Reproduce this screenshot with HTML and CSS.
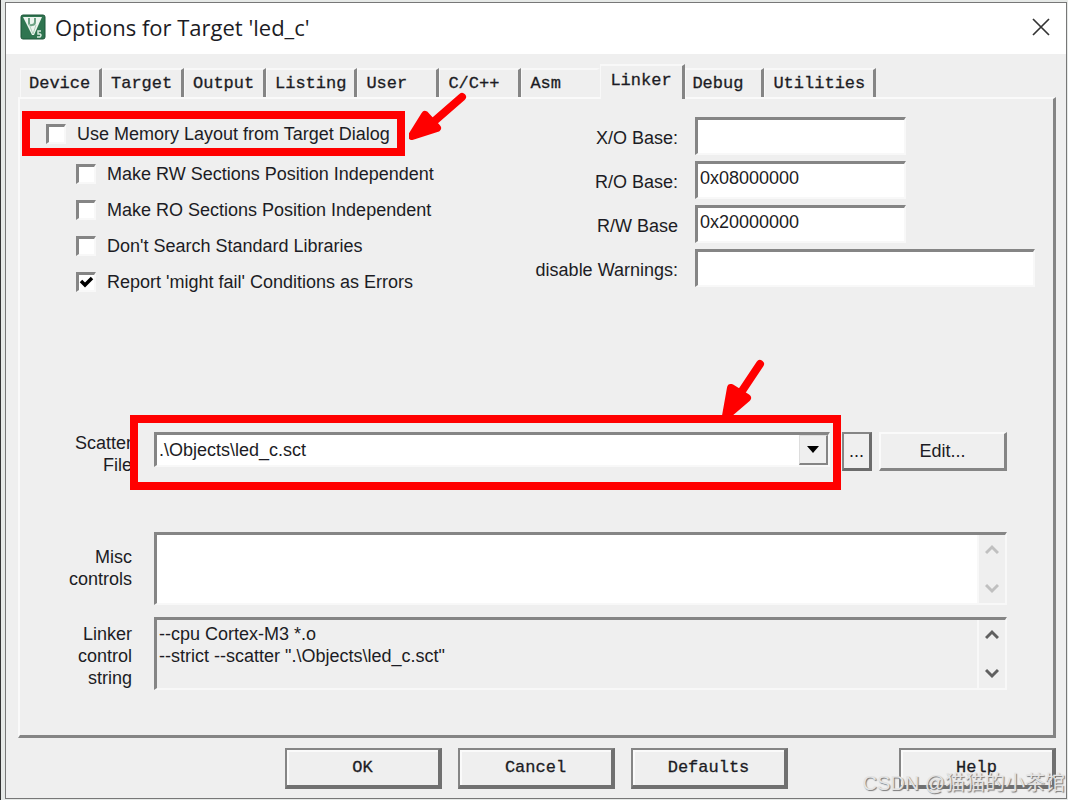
FILE: index.html
```html
<!DOCTYPE html>
<html lang="en">
<head>
  <meta charset="UTF-8">
  <meta name="viewport" content="width=device-width, initial-scale=1">
  <title>Options for Target 'led_c'</title>
  <link rel="stylesheet" href="styles.css">
</head>
<body>
  <div class="dialog">
    <header class="titlebar">
      <svg class="app-icon" width="26" height="26" viewBox="0 0 26 26">
        <rect x="1" y="1" width="24" height="24" rx="2" fill="#2f7550" stroke="#1d5638"/>
        <path d="M3 3H22L14 21H12Z" fill="#edf5ef"/>
        <path d="M9 4V9Q9 12 12 11Q15 11 15 8V4" fill="none" stroke="#6da284" stroke-width="2"/>
        <path d="M9 10L13 20L16 11" fill="none" stroke="#b2d0bd" stroke-width="1"/>
        <path d="M21 17H18V20H20Q22 21 20 23H17" fill="none" stroke="#d7eadd" stroke-width="1.5"/>
      </svg>
      <h1>Options for Target 'led_c'</h1>
      <button class="close-button" aria-label="Close">
        <svg width="20" height="20" viewBox="0 0 20 20"><path d="M2 2L18 18M18 2L2 18" stroke="#333" stroke-width="1.7"/></svg>
      </button>
    </header>

    <nav class="tabs" role="tablist">
      <button class="tab" role="tab">Device</button>
      <button class="tab" role="tab">Target</button>
      <button class="tab" role="tab">Output</button>
      <button class="tab" role="tab">Listing</button>
      <button class="tab" role="tab">User</button>
      <button class="tab" role="tab">C/C++</button>
      <button class="tab before-active" role="tab">Asm</button>
      <button class="tab active" role="tab" aria-selected="true">Linker</button>
      <button class="tab after-active" role="tab">Debug</button>
      <button class="tab" role="tab">Utilities</button>
    </nav>

    <main class="panel">
      <div class="settings">
        <div class="checks">
          <div class="check-main">
            <label class="check"><input type="checkbox"> Use Memory Layout from Target Dialog</label>
            <svg class="arrow arrow-layout" width="62" height="54" viewBox="0 0 62 54">
              <path d="M53 7L22 34" stroke="#f00" stroke-width="8" stroke-linecap="round"/>
              <path d="M3 46L16 25L28 38Z" fill="#f00" stroke="#f00" stroke-width="8" stroke-linejoin="round"/>
            </svg>
          </div>
          <div class="check-list">
            <label class="check"><input type="checkbox"> Make RW Sections Position Independent</label>
            <label class="check"><input type="checkbox"> Make RO Sections Position Independent</label>
            <label class="check"><input type="checkbox"> Don't Search Standard Libraries</label>
            <label class="check"><input type="checkbox" checked> Report 'might fail' Conditions as Errors</label>
          </div>
        </div>
        <div class="bases">
          <label for="xo-base">X/O Base:</label>
          <input class="sunken short" type="text" id="xo-base">
          <label for="ro-base">R/O Base:</label>
          <input class="sunken short" type="text" id="ro-base" value="0x08000000">
          <label for="rw-base">R/W Base</label>
          <input class="sunken short" type="text" id="rw-base" value="0x20000000">
          <label for="warnings">disable Warnings:</label>
          <input class="sunken" type="text" id="warnings">
        </div>
      </div>

      <div class="row scatter">
        <label class="row-label" for="scatter-file">Scatter<br>File</label>
        <div class="combo sunken">
          <select id="scatter-file">
            <option>.\Objects\led_c.sct</option>
          </select>
          <span class="combo-arrow"><svg width="12" height="7" viewBox="0 0 12 7"><path d="M0 0H12L6 7Z"/></svg></span>
        </div>
        <button class="button browse">...</button>
        <button class="button edit">Edit...</button>
        <div class="mark"></div>
        <svg class="arrow arrow-scatter" width="50" height="64" viewBox="0 0 50 64">
          <path d="M40 7L22 34" stroke="#f00" stroke-width="8" stroke-linecap="round"/>
          <path d="M6 59L11 31L27 41Z" fill="#f00" stroke="#f00" stroke-width="8" stroke-linejoin="round"/>
        </svg>
      </div>

      <div class="row misc">
        <label class="row-label" for="misc-controls">Misc<br>controls</label>
        <div class="memo sunken">
          <textarea id="misc-controls"></textarea>
          <div class="scroll disabled">
            <button aria-label="Scroll up" disabled><svg width="14" height="12" viewBox="0 0 14 12"><path d="M1 9L7 3L13 9"/></svg></button>
            <button aria-label="Scroll down" disabled><svg width="14" height="12" viewBox="0 0 14 12"><path d="M1 3L7 9L13 3"/></svg></button>
          </div>
        </div>
      </div>

      <div class="row command">
        <label class="row-label" for="control-string">Linker<br>control<br>string</label>
        <div class="memo sunken readonly">
          <textarea id="control-string" readonly>--cpu Cortex-M3 *.o
--strict --scatter ".\Objects\led_c.sct"</textarea>
          <div class="scroll">
            <button aria-label="Scroll up"><svg width="14" height="12" viewBox="0 0 14 12"><path d="M1 9L7 3L13 9"/></svg></button>
            <button aria-label="Scroll down"><svg width="14" height="12" viewBox="0 0 14 12"><path d="M1 3L7 9L13 3"/></svg></button>
          </div>
        </div>
      </div>
    </main>

    <footer class="actions">
      <button class="button framed">OK</button>
      <button class="button framed">Cancel</button>
      <button class="button framed">Defaults</button>
      <button class="button framed help">Help</button>
    </footer>
    <div class="watermark">CSDN @猫猫的小茶馆</div>
  </div>
</body>
</html>
```
FILE: styles.css
```css
* {
  box-sizing: border-box;
}
body {
  margin: 0;
  padding: 2px 1px 1px 4px;
  min-height: 100vh;
  display: flex;
  background-color: #e6e9e7;
  border-left: 1px solid #333;
  font-family: "Liberation Sans", Arial, sans-serif;
  font-size: 18px;
  line-height: 22px;
  color: #1c1c24;
}
button, input, select, textarea {
  font: inherit;
  color: inherit;
  margin: 0;
  border-radius: 0;
}
.dialog {
  position: relative;
  flex: 1;
  display: flex;
  flex-direction: column;
  background-color: #efefef;
  border: 1px solid #777;
}

/* Title bar */
.titlebar {
  display: flex;
  align-items: center;
  gap: 9px;
  height: 51px;
  padding: 0 15px 3px 14px;
  background-color: #fff;
}
.titlebar h1 {
  flex: 1;
  margin: 0;
  font-family: "Open Sans", "Noto Sans", sans-serif;
  font-size: 22px;
  font-weight: normal;
  line-height: 28px;
}
.close-button {
  display: flex;
  padding: 0;
  border: none;
  background: none;
}

/* Tabs */
.tabs {
  display: flex;
  align-items: flex-end;
  height: 43px;
  padding-left: 14px;
}
.tab {
  min-width: 82px;
  height: 29px;
  padding: 0 8px;
  text-align: left;
  font-family: "Liberation Mono", monospace;
  font-size: 17px;
  line-height: 26px;
  -webkit-text-stroke: 0.3px #1c1c24;
  background-color: #efefef;
  border: solid;
  border-width: 2px 3px 0 1px;
  border-color: #f8f8f8 #858585 #f8f8f8 #f8f8f8;
}
.tab.before-active {
  min-width: 79px;
  border-right-color: #efefef;
}
.tab.active {
  z-index: 1;
  height: 35px;
  min-width: 85px;
  margin-bottom: -2px;
  padding: 0 9px 4px;
}
.tab.after-active {
  min-width: 79px;
  padding-left: 6px;
}

/* Linker page */
.panel {
  flex: 1;
  margin: 0 10px 0 12px;
  padding: 18px 18px 44px 0;
  border: solid;
  border-width: 2px 3px 3px 2px;
  border-color: #fafafa #858585 #858585 #fafafa;
}
.settings {
  display: flex;
  justify-content: space-between;
  margin-bottom: 132px;
}
.check-main {
  position: relative;
  width: fit-content;
  margin: -6px 0 0 2px;
  padding: 6px 7px 6px 16px;
  border: 8px solid #f00;
}
.check {
  display: flex;
  align-items: center;
  gap: 11px;
  height: 36px;
}
.check-main .check {
  height: 17px;
}
.check-list {
  padding: 0 0 0 56px;
}
.check input {
  appearance: none;
  width: 20px;
  height: 20px;
  background-color: #fff;
  border: solid;
  border-width: 3px 2px 2px 3px;
  border-color: #858585 #f8f8f8 #f8f8f8 #858585;
}
.check input:checked {
  background-image: url("data:image/svg+xml,%3Csvg xmlns='http://www.w3.org/2000/svg' viewBox='0 0 15 15'%3E%3Cpath d='M2 6L6 10L13 3' fill='none' stroke='black' stroke-width='3.5'/%3E%3C/svg%3E");
}
.bases {
  display: grid;
  grid-template-columns: auto 340px;
  gap: 6px 17px;
  align-items: center;
  align-content: start;
  text-align: right;
}
.bases label {
  padding-top: 4px;
}
.sunken {
  background-color: #fff;
  border: solid;
  border-width: 3px 2px 2px 3px;
  border-color: #858585 #f8f8f8 #f8f8f8 #858585;
}
.bases input {
  width: 100%;
  height: 38px;
  padding: 0 2px 5px;
}
.bases .short {
  width: 211px;
}

/* Labelled rows */
.row {
  position: relative;
  display: flex;
  align-items: flex-start;
  padding-right: 28px;
}
.row-label {
  width: 112px;
  margin-right: 22px;
  text-align: right;
}
.scatter {
  margin-bottom: 56px;
}
.combo {
  flex: 1;
  display: flex;
  position: relative;
  height: 35px;
  margin-right: 12px;
}
.combo select {
  appearance: none;
  flex: 1;
  padding: 0 2px;
  border: none;
  background: none;
}
.combo-arrow {
  position: absolute;
  right: 0;
  top: 0;
  bottom: 0;
  width: 29px;
  display: flex;
  align-items: center;
  justify-content: center;
  pointer-events: none;
  background-color: #efefef;
  border: solid;
  border-width: 1px 2px 2px 1px;
  border-color: #ddd #858585 #858585 #ddd;
}
.mark {
  position: absolute;
  left: 110px;
  right: 194px;
  top: -17px;
  height: 75px;
  border: 8px solid #f00;
  pointer-events: none;
}
.arrow {
  position: absolute;
  pointer-events: none;
}
.arrow-layout {
  right: -74px;
  top: -29px;
}
.arrow-scatter {
  right: 265px;
  top: -75px;
}
.misc {
  margin-bottom: 12px;
}
.misc .row-label {
  padding-top: 14px;
}
.command .row-label {
  padding-top: 6px;
}
.memo {
  flex: 1;
  display: flex;
  height: 73px;
}
.memo.readonly {
  background-color: #efefef;
}
.memo textarea {
  flex: 1;
  padding: 3px 2px;
  border: none;
  background: none;
  resize: none;
  overflow: hidden;
}
.scroll {
  display: flex;
  flex-direction: column;
  justify-content: space-between;
  width: 28px;
  background-color: #efefef;
  border-left: 2px solid #f8f8f8;
}
.scroll button {
  height: 30px;
  padding: 0;
  border: none;
  background: none;
}
.scroll path {
  fill: none;
  stroke: #606060;
  stroke-width: 3;
}
.scroll.disabled path {
  stroke: #c0c0c0;
}

/* Buttons */
.button {
  height: 39px;
  padding: 0;
  background-color: #efefef;
  border: solid;
  border-width: 2px 3px 3px 2px;
  border-color: #fafafa #858585 #858585 #fafafa;
}
.browse {
  width: 30px;
  margin-right: 7px;
  border-color: #858585 #6c6c6c #6c6c6c #858585;
}
.edit {
  width: 128px;
}
.actions {
  display: flex;
  justify-content: flex-end;
  gap: 16px;
  padding: 10px 10px 9px;
}
.framed {
  width: 157px;
  height: 41px;
  font-family: "Liberation Mono", monospace;
  font-size: 17px;
  -webkit-text-stroke: 0.3px #1c1c24;
  border-width: 2px 4px 4px 2px;
  border-color: #858585 #707070 #707070 #858585;
  box-shadow: inset 2px 2px #fafafa;
}
.help {
  margin-left: 95px;
}
.watermark {
  position: absolute;
  right: 1px;
  bottom: 3px;
  font-family: "Liberation Sans", "Noto Sans CJK SC", sans-serif;
  font-size: 20px;
  line-height: 24px;
  color: #e4e4e4;
  text-shadow: 1px 1px 1px #777;
  pointer-events: none;
}
```
